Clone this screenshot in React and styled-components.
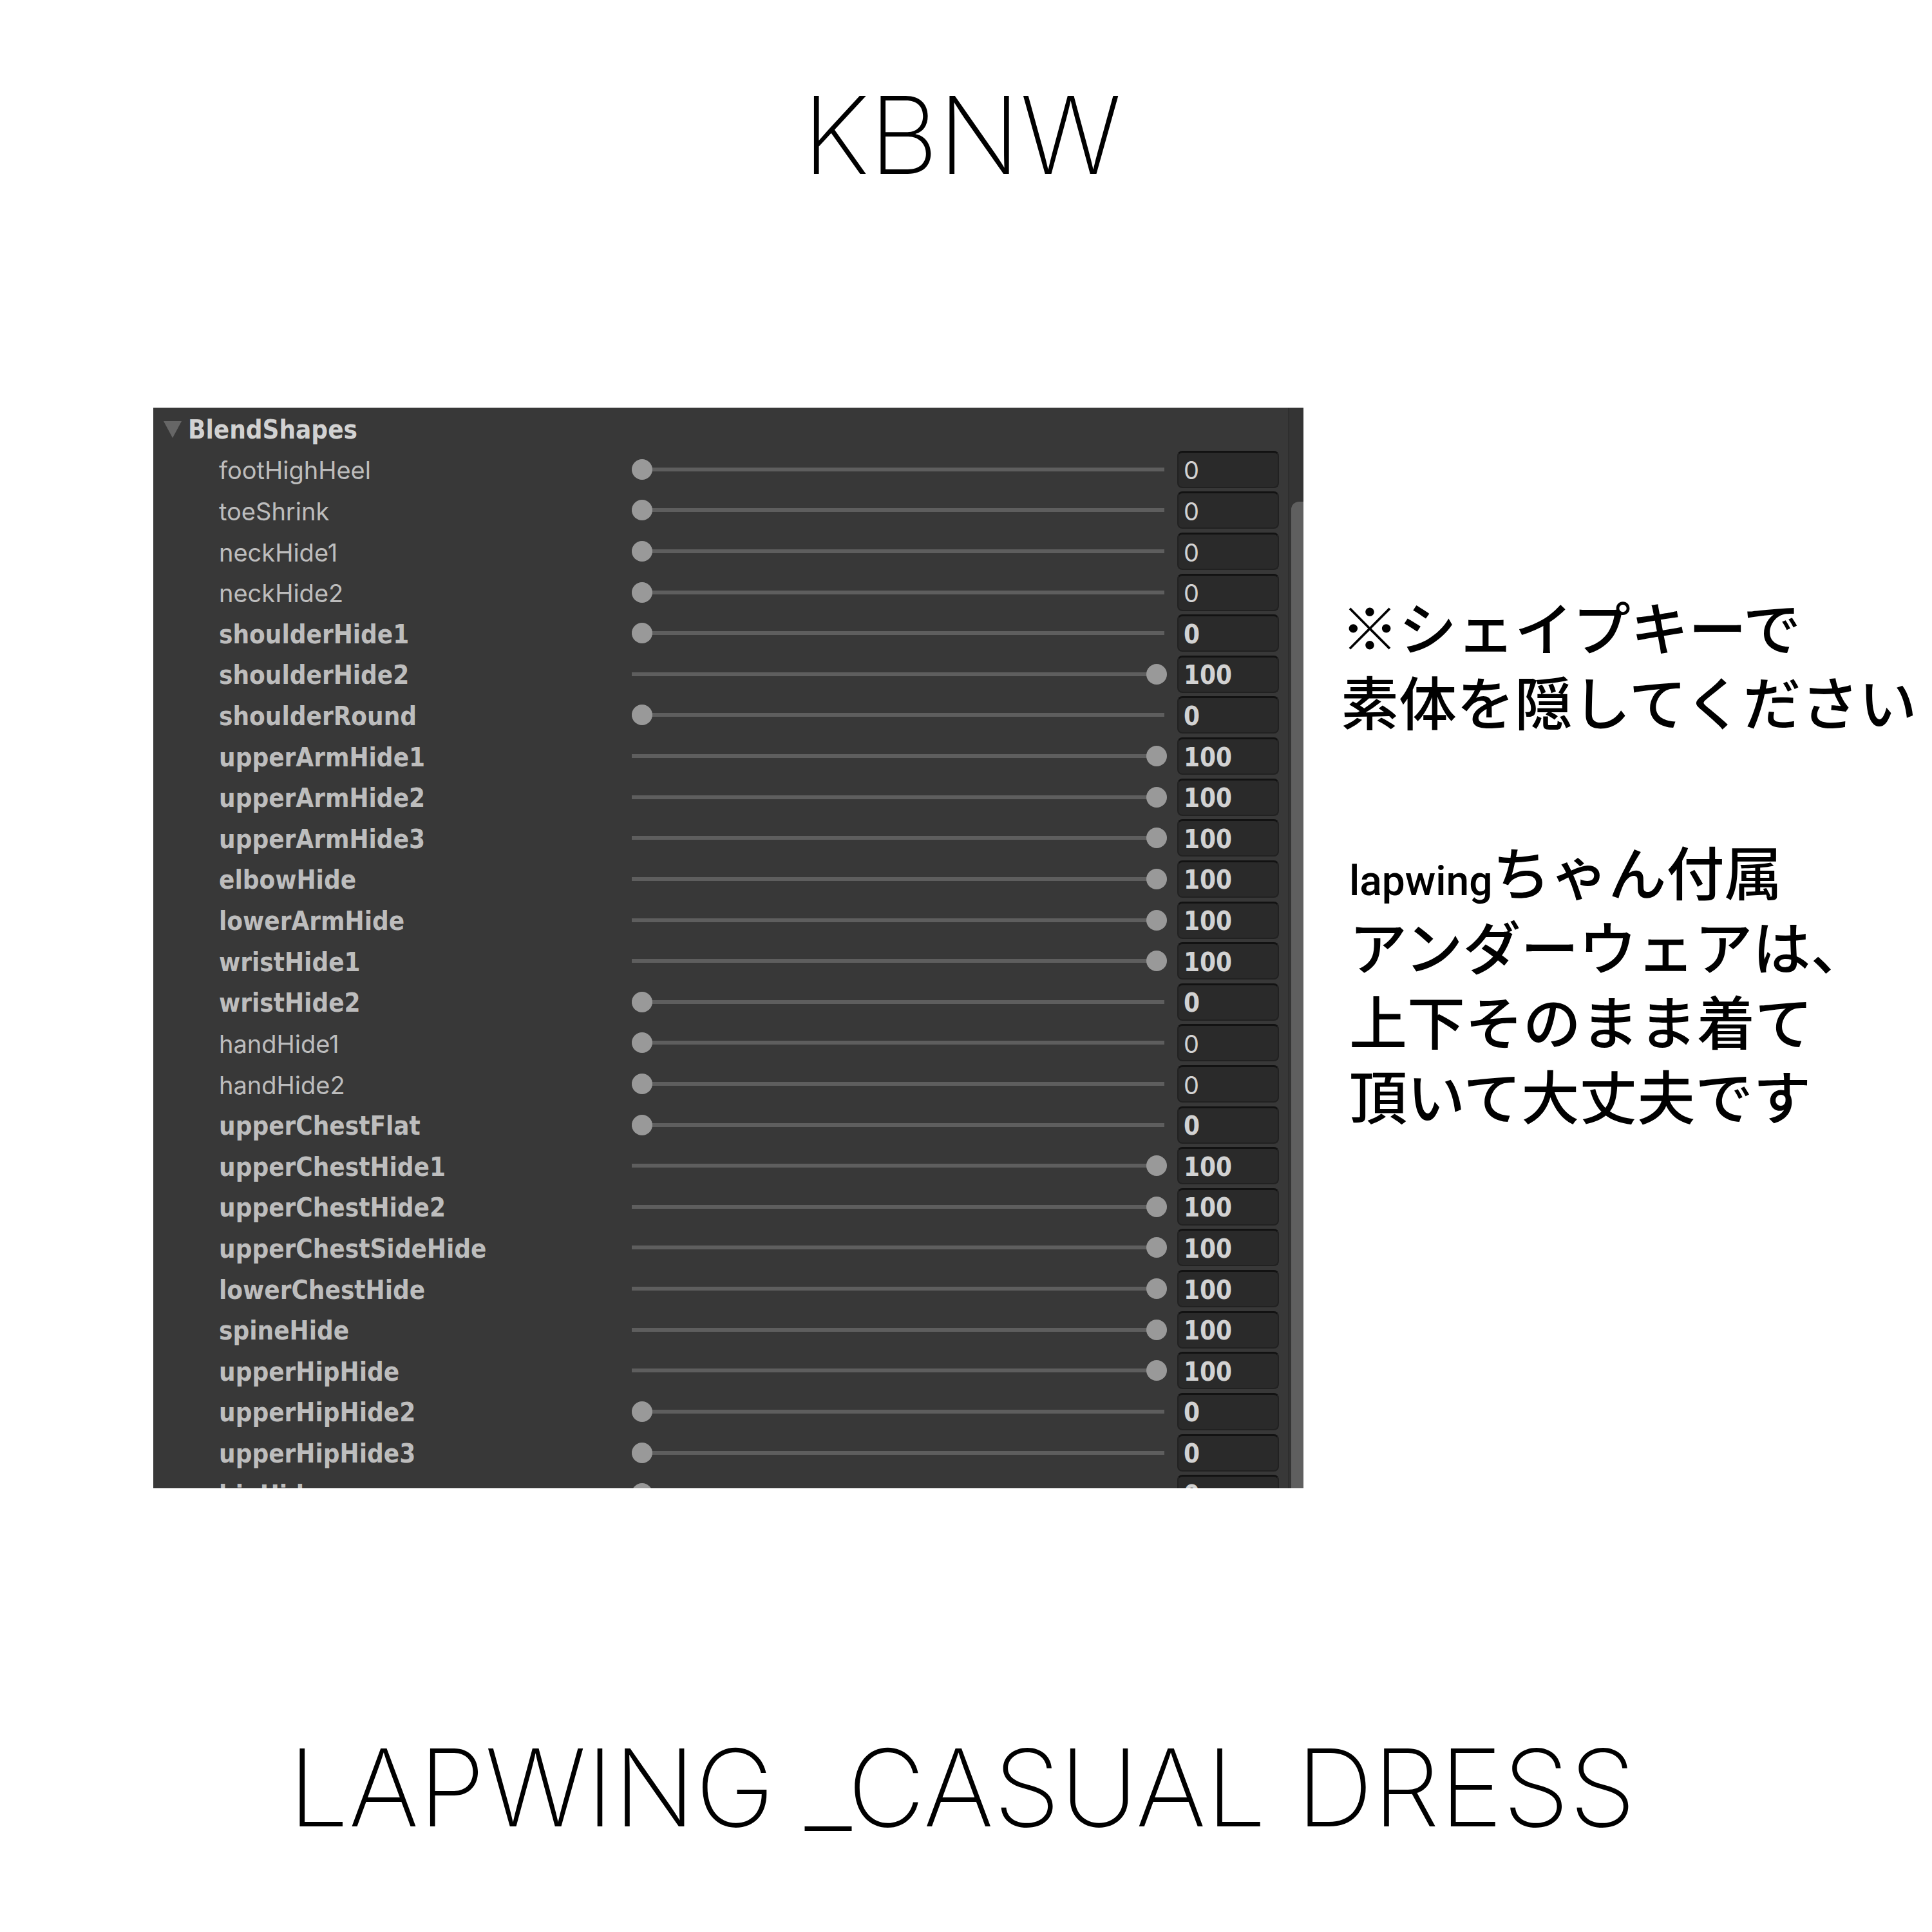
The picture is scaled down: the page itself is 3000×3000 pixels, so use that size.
import React, { useState } from 'react';
import styled, { createGlobalStyle } from 'styled-components';

const GlobalStyle = createGlobalStyle`
  * {
    box-sizing: border-box;
  }

  body {
    margin: 0;
    background: #ffffff;
    color: #000000;
    font-family: 'Inter', sans-serif;
  }
`;

const Page = styled.div`
  display: flex;
  flex-direction: column;
  padding: 130px 0 144px;
`;

const Title = styled.h1`
  margin: 0;
  padding-right: 12px;
  font-family: 'Inter', sans-serif;
  font-weight: 250;
  font-size: 166px;
  line-height: 160px;
  text-align: center;
  white-space: nowrap;
`;

const Content = styled.main`
  display: grid;
  grid-template-columns: minmax(0, 1fr) 918px;
  column-gap: 58px;
  align-items: start;
  margin: 343px 0 385px;
  padding-left: 238px;
`;

const Inspector = styled.section`
  display: grid;
  grid-template-columns: minmax(0, 1fr) 24px;
  height: 1678px;
  overflow: hidden;
  background: #383838;
`;

const InspectorBody = styled.div`
  min-width: 0;
  padding-right: 14px;
`;

const Foldout = styled.button`
  display: flex;
  align-items: center;
  gap: 10px;
  width: 100%;
  height: 64px;
  padding: 3px 0 0 16px;
  border: none;
  background: transparent;
  color: #d2d2d2;
  font-family: 'DejaVu Sans Condensed', 'DejaVu Sans', sans-serif;
  font-weight: 700;
  font-size: 40px;
  line-height: 48px;
  text-align: left;
  cursor: pointer;

  svg {
    width: 28px;
    height: 28px;
    fill: #666666;
  }
`;

const ShapeList = styled.div`
  display: grid;
  grid-auto-rows: 1fr;
  height: 1654px;
`;

const ShapeRow = styled.div`
  display: grid;
  grid-template-columns: 641px minmax(0, 1fr) 158px;
  align-items: center;
  padding-left: 102px;
  font-family: ${props => props.$changed ? "'DejaVu Sans Condensed', 'DejaVu Sans', sans-serif" : "'Inter', sans-serif"};
  font-weight: ${props => props.$changed ? 700 : 400};
  font-size: ${props => props.$changed ? 40 : 38}px;
`;

const ShapeLabel = styled.label`
  padding-top: 3px;
  color: #bdbdbd;
  line-height: 48px;
`;

const Slider = styled.input`
  appearance: none;
  height: 32px;
  margin: 0 16px 0 0;
  background: linear-gradient(#5e5e5e, #5e5e5e) left center / calc(100% - 4px) 6px no-repeat;
  cursor: pointer;

  &::-webkit-slider-thumb {
    appearance: none;
    width: 32px;
    height: 32px;
    border-radius: 50%;
    background: #999999;
  }
`;

const ValueField = styled.input`
  width: 100%;
  height: 58px;
  padding: 2px 0 0 8px;
  border: 2px solid #212121;
  border-top: 3px solid #121212;
  border-radius: 8px;
  background: #2a2a2a;
  color: #d2d2d2;
  font: inherit;
  outline: none;
`;

const ScrollTrack = styled.div`
  display: flex;
  flex-direction: column;
  padding: 146px 0 0 3px;
  border-left: 2px solid #2e2e2e;
  background: #343434;
`;

const ScrollThumb = styled.div`
  flex: 1;
  border-radius: 12px 0 0 0;
  background: #5f5f5f;
`;

const Notes = styled.aside`
  display: flex;
  flex-direction: column;
  gap: 148px;
  padding-top: 280px;
  font-family: 'Noto Sans CJK JP', sans-serif;
  font-weight: 500;
  font-size: 90px;
  line-height: 116px;
  white-space: nowrap;
`;

const Note = styled.p`
  margin: 0;
`;

const NoteLine = styled.span`
  display: block;
  padding-left: ${props => props.$indent ? 13 : 0}px;
`;

const Latin = styled.span`
  font-family: 'Roboto', sans-serif;
  font-size: 64px;
  line-height: 1;
`;

const blendShapes = [
  { name: 'footHighHeel', value: 0 },
  { name: 'toeShrink', value: 0 },
  { name: 'neckHide1', value: 0 },
  { name: 'neckHide2', value: 0 },
  { name: 'shoulderHide1', value: 0, changed: true },
  { name: 'shoulderHide2', value: 100, changed: true },
  { name: 'shoulderRound', value: 0, changed: true },
  { name: 'upperArmHide1', value: 100, changed: true },
  { name: 'upperArmHide2', value: 100, changed: true },
  { name: 'upperArmHide3', value: 100, changed: true },
  { name: 'elbowHide', value: 100, changed: true },
  { name: 'lowerArmHide', value: 100, changed: true },
  { name: 'wristHide1', value: 100, changed: true },
  { name: 'wristHide2', value: 0, changed: true },
  { name: 'handHide1', value: 0 },
  { name: 'handHide2', value: 0 },
  { name: 'upperChestFlat', value: 0, changed: true },
  { name: 'upperChestHide1', value: 100, changed: true },
  { name: 'upperChestHide2', value: 100, changed: true },
  { name: 'upperChestSideHide', value: 100, changed: true },
  { name: 'lowerChestHide', value: 100, changed: true },
  { name: 'spineHide', value: 100, changed: true },
  { name: 'upperHipHide', value: 100, changed: true },
  { name: 'upperHipHide2', value: 0, changed: true },
  { name: 'upperHipHide3', value: 0, changed: true },
  { name: 'hipHide', value: 0, changed: true },
];

const BlendShape = ({ name, value, changed, onChange }) => {
  const handleChange = (event) => {
    const next = Number(event.target.value);
    if (!Number.isNaN(next)) {
      onChange(name, Math.min(100, Math.max(0, next)));
    }
  };

  return (
    <ShapeRow $changed={changed}>
      <ShapeLabel htmlFor={name}>{name}</ShapeLabel>
      <Slider id={name} type="range" min="0" max="100" value={value} onChange={handleChange} />
      <ValueField type="text" inputMode="numeric" aria-label={`${name} value`} value={value} onChange={handleChange} />
    </ShapeRow>
  );
};

const App = () => {
  const [shapes, setShapes] = useState(blendShapes);
  const [open, setOpen] = useState(true);

  const updateShape = (name, value) => {
    setShapes(shapes.map(shape => shape.name === name ? { ...shape, value, changed: true } : shape));
  };

  return (
    <>
      <GlobalStyle />
      <Page>
        <Title>KBNW</Title>
        <Content>
          <Inspector>
            <InspectorBody>
              <Foldout type="button" aria-expanded={open} onClick={() => setOpen(!open)}>
                <svg viewBox="0 0 28 28" aria-hidden="true">
                  <path d={open ? 'M0 1H28L14 27Z' : 'M1 0V28L27 14Z'} />
                </svg>
                BlendShapes
              </Foldout>
              {open && (
                <ShapeList>
                  {shapes.map(shape => (
                    <BlendShape key={shape.name} {...shape} onChange={updateShape} />
                  ))}
                </ShapeList>
              )}
            </InspectorBody>
            <ScrollTrack>
              <ScrollThumb />
            </ScrollTrack>
          </Inspector>
          <Notes>
            <Note>
              <NoteLine>※シェイプキーで</NoteLine>
              <NoteLine>素体を隠してください</NoteLine>
            </Note>
            <Note>
              <NoteLine $indent><Latin>lapwing</Latin>ちゃん付属</NoteLine>
              <NoteLine $indent>アンダーウェアは、</NoteLine>
              <NoteLine $indent>上下そのまま着て</NoteLine>
              <NoteLine $indent>頂いて大丈夫です</NoteLine>
            </Note>
          </Notes>
        </Content>
        <Title as="h2">LAPWING _CASUAL DRESS</Title>
      </Page>
    </>
  );
};

export default App;
